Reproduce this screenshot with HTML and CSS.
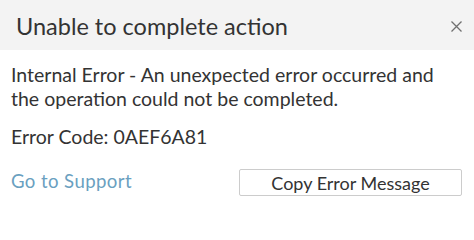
FILE: index.html
```html
<!DOCTYPE html>
<html>
<head>
<meta charset="utf-8">
<link rel="stylesheet" href="styles.css">
</head>
<body>
<div class="dialog">
  <div class="header">
    <div class="title">Unable to complete action</div>
    <svg class="close" width="11" height="11" viewBox="0 0 11 11"><path d="M0.5 0.5 L10.5 10.5 M10.5 0.5 L0.5 10.5" stroke="#707070" stroke-width="1.3" fill="none"/></svg>
  </div>
  <div class="body">
    <p class="message">Internal Error - An unexpected error occurred and the operation could not be completed.</p>
    <p class="code">Error Code: 0AEF6A81</p>
  </div>
  <div class="footer">
    <a class="link" href="#">Go to Support</a>
    <button class="btn">Copy Error Message</button>
  </div>
</div>
</body>
</html>
```
FILE: styles.css
```css
html, body {
  margin: 0;
  padding: 0;
  background: #ffffff;
}
.dialog {
  width: 474px;
  height: 206px;
  font-family: Lato, "Open Sans", sans-serif;
  color: #333333;
}
.header {
  height: 50px;
  background: #f3f3f3;
  display: flex;
  align-items: flex-start;
  justify-content: space-between;
  padding: 12px 12px 0 16px;
  box-sizing: border-box;
}
.title {
  font-size: 23.5px;
  line-height: 28px;
  color: #333333;
}
.close {
  display: block;
  margin-top: 9px;
  margin-right: 0;
}
.body {
  padding: 13px 12px 0 11px;
}
.message {
  margin: 0;
  width: 445px;
  font-size: 19.5px;
  line-height: 24px;
}
.code {
  margin: 14px 0 0 0;
  font-size: 19.5px;
  line-height: 24px;
}
.footer {
  display: flex;
  align-items: center;
  justify-content: space-between;
  padding: 0 12px 0 11px;
  margin-top: 20px;
}
.link {
  font-size: 18.6px;
  letter-spacing: 0.4px;
  line-height: 24px;
  margin-bottom: 3px;
  color: #6a9fc0;
  text-decoration: none;
}
.btn {
  width: 223px;
  height: 27px;
  border: 1px solid #cccccc;
  border-radius: 2px;
  background: #ffffff;
  font-family: Lato, "Open Sans", sans-serif;
  font-size: 18px;
  color: #333333;
  padding: 0;
}
```
